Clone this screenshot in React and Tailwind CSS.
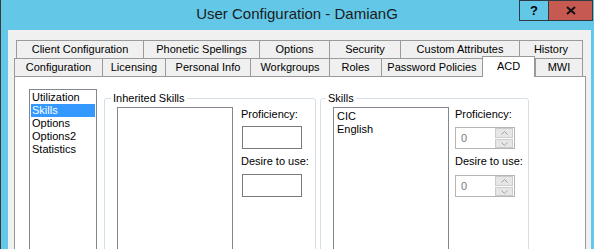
import React from 'react';

const font = { fontFamily: '"Liberation Sans", Arial, sans-serif' };

const topTabs = [
  { label: 'Client Configuration', w: 'w-[127px]' },
  { label: 'Phonetic Spellings', w: 'w-[116px]' },
  { label: 'Options', w: 'w-[70px]' },
  { label: 'Security', w: 'w-[71px]' },
  { label: 'Custom Attributes', w: 'w-[119px]' },
  { label: 'History', w: 'w-[64px] border-r' },
];

const bottomTabs = [
  { label: 'Configuration', w: 'w-[88px]' },
  { label: 'Licensing', w: 'w-[63px]' },
  { label: 'Personal Info', w: 'w-[85px]' },
  { label: 'Workgroups', w: 'w-[79px]' },
  { label: 'Roles', w: 'w-[52px]' },
  { label: 'Password Policies', w: 'w-[101px]' },
  { label: 'ACD', w: 'w-[53px]', active: true },
  { label: 'MWI', w: 'w-[48px] border-r' },
];

const acdPages = ['Utilization', 'Skills', 'Options', 'Options2', 'Statistics'];

const Tab = ({ label, w, active }) =>
  active ? (
    <div
      className={`${w} relative z-10 -mt-[2px] h-[21px] border-l border-t border-r border-[#999999] bg-white flex justify-center pt-[3px] leading-[13px]`}
    >
      {label}
    </div>
  ) : (
    <div
      className={`${w} h-[18px] border-l border-t border-[#9a9a9a] bg-[#f0f0f0] flex items-center justify-center leading-[13px]`}
    >
      {label}
    </div>
  );

const Spinner = () => (
  <div className="w-[60px] h-[22px] border border-[#b5b5b5] bg-white flex items-center justify-between">
    <span className="pl-[5px] text-[#7a7a7a] leading-[13px]">0</span>
    <div className="flex flex-col gap-px pr-px">
      <div className="w-[18px] h-[10px] bg-[#e6e6e6] border border-[#cccccc] flex items-center justify-center">
        <svg width="7" height="4" viewBox="0 0 7 4">
          <path d="M0.5 3.5 L3.5 0.5 L6.5 3.5" stroke="#a0a0a0" fill="none" strokeWidth="1" />
        </svg>
      </div>
      <div className="w-[18px] h-[9px] bg-[#e6e6e6] border border-[#cccccc] flex items-center justify-center">
        <svg width="7" height="4" viewBox="0 0 7 4">
          <path d="M0.5 0.5 L3.5 3.5 L6.5 0.5" stroke="#a0a0a0" fill="none" strokeWidth="1" />
        </svg>
      </div>
    </div>
  </div>
);

export default function App() {
  return (
    <div
      style={font}
      className="w-[594px] h-[249px] overflow-hidden bg-[#63c8e8] border-l border-[#3a3a3a] flex flex-col text-[11px] text-black"
    >
      {/* title bar */}
      <div className="h-[30px] shrink-0 relative flex items-center justify-center">
        <span className="text-[15px] text-[#1b1b1b] -ml-px pb-px">User Configuration - DamianG</span>
        <div className="absolute top-0 left-[518px] flex">
          <div className="w-[30px] h-[21px] border border-[#2f3b44] flex items-center justify-center font-bold text-[13px]">
            ?
          </div>
          <div className="w-[44px] h-[21px] border-t border-b border-r border-[#2f3b44] bg-[#c75a50] flex items-center justify-center">
            <svg width="10" height="9" viewBox="0 0 10 9">
              <path d="M1 1 L9 8 M9 1 L1 8" stroke="#111" strokeWidth="2" />
            </svg>
          </div>
        </div>
      </div>

      {/* client area */}
      <div className="flex-1 ml-[7px] mr-[3px] bg-[#f0f0f0] pt-[10px] flex flex-col">
        <div className="flex ml-[8px]">
          {topTabs.map((t) => (
            <Tab key={t.label} {...t} />
          ))}
        </div>
        <div className="flex ml-[6px] h-[18px]">
          {bottomTabs.map((t) => (
            <Tab key={t.label} {...t} />
          ))}
        </div>

        {/* tab panel */}
        <div className="ml-[6px] w-[572px] flex-1 border border-[#999999] bg-white pl-[14px] pt-[12px] flex items-start">
          <div className="w-[68px] h-[200px] border border-[#828790] p-px">
            {acdPages.map((p) => (
              <div
                key={p}
                className={`h-[13px] leading-[13px] pl-px ${p === 'Skills' ? 'bg-[#3399ff] text-white' : ''}`}
              >
                {p}
              </div>
            ))}
          </div>

          <fieldset className="ml-[7px] mt-[3px] w-[212px] h-[200px] border border-[#d5dfe5] rounded-[3px]">
            <legend className="ml-[6px] px-[2px] leading-[13px]">Inherited Skills</legend>
            <div className="flex pl-[12px] pt-[2px]">
              <div className="w-[116px] h-[200px] border border-[#828790]" />
              <div className="ml-[8px] flex flex-col">
                <span className="leading-[13px] pt-px">Proficiency:</span>
                <div className="ml-px mt-[5px] w-[60px] h-[23px] border border-[#7a7a7a]" />
                <span className="leading-[13px] mt-[6px]">Desire to use:</span>
                <div className="ml-px mt-[6px] w-[60px] h-[23px] border border-[#7a7a7a]" />
              </div>
            </div>
          </fieldset>

          <fieldset className="ml-[4px] mt-[3px] w-[209px] h-[200px] border border-[#d5dfe5] rounded-[3px]">
            <legend className="ml-[5px] px-[2px] leading-[13px]">Skills</legend>
            <div className="flex pl-[12px] pt-[2px]">
              <div className="w-[116px] h-[200px] border border-[#828790] pt-[2px] pl-[3px]">
                <div className="leading-[13px]">CIC</div>
                <div className="leading-[13px]">English</div>
              </div>
              <div className="ml-[6px] flex flex-col">
                <span className="leading-[13px] pt-px">Proficiency:</span>
                <div className="mt-[6px]">
                  <Spinner />
                </div>
                <span className="leading-[13px] mt-[6px]">Desire to use:</span>
                <div className="mt-[7px]">
                  <Spinner />
                </div>
              </div>
            </div>
          </fieldset>
        </div>
      </div>
    </div>
  );
}
